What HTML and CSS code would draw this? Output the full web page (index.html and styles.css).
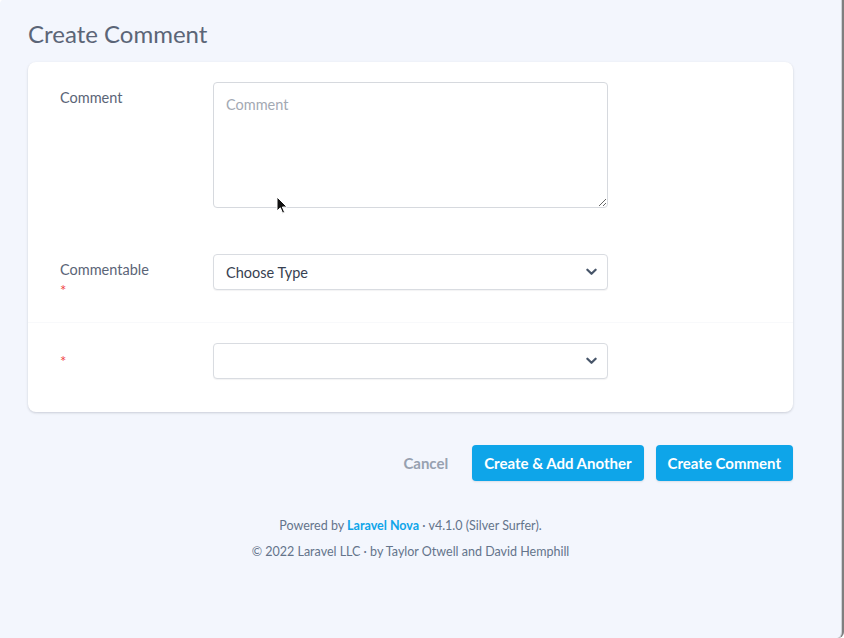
FILE: index.html
```html
<!DOCTYPE html>
<html lang="en">
<head>
<meta charset="utf-8">
<title>Create Comment</title>
<link rel="stylesheet" href="styles.css">
</head>
<body>
<div class="frame">
  <main class="page">
    <h1 class="title">Create Comment</h1>
    <form class="card">
      <div class="row row-first">
        <div class="label-col"><label class="label">Comment</label></div>
        <div class="field-col">
          <textarea class="textarea" placeholder="Comment"></textarea>
        </div>
      </div>
      <div class="row row-mid">
        <div class="label-col">
          <label class="label">Commentable</label>
          <span class="req">*</span>
        </div>
        <div class="field-col">
          <div class="select">
            <span class="select-text">Choose Type</span>
            <svg class="chev" viewBox="0 0 12 8" width="11" height="8"><path d="M1.5 1.5 L6 6 L10.5 1.5" fill="none" stroke="#475569" stroke-width="2.4" stroke-linecap="round" stroke-linejoin="round"/></svg>
          </div>
        </div>
      </div>
      <div class="row row-last">
        <div class="label-col"><span class="req req-only">*</span></div>
        <div class="field-col">
          <div class="select">
            <span class="select-text"></span>
            <svg class="chev" viewBox="0 0 12 8" width="11" height="8"><path d="M1.5 1.5 L6 6 L10.5 1.5" fill="none" stroke="#475569" stroke-width="2.4" stroke-linecap="round" stroke-linejoin="round"/></svg>
          </div>
        </div>
      </div>
    </form>
    <div class="actions">
      <button type="button" class="cancel">Cancel</button>
      <button type="button" class="btn">Create &amp; Add Another</button>
      <button type="button" class="btn">Create Comment</button>
    </div>
    <footer class="footer">
      <p>Powered by <a class="nova" href="#">Laravel Nova</a> · v4.1.0 (Silver Surfer).</p>
      <p>© 2022 Laravel LLC · by Taylor Otwell and David Hemphill</p>
    </footer>
  </main>
  <svg class="cursor" width="12" height="19" viewBox="0 0 12 19"><path d="M1 1 L1 15 L4.3 11.8 L6.6 17.2 L8.6 16.3 L6.4 11 L11 11 Z" fill="#111" stroke="#fff" stroke-width="1" stroke-linejoin="round"/></svg>
</div>
</body>
</html>
```

FILE: styles.css
```css
* { box-sizing: border-box; }
html, body { margin: 0; padding: 0; }
body {
  width: 844px;
  height: 638px;
  background: #ffffff;
  font-family: "Lato", "Noto Sans", sans-serif;
  overflow: hidden;
}
.frame {
  position: relative;
  width: 844px;
  height: 638px;
  background: #f3f6fd;
  border-right: 2px solid #7f7f7f;
  box-shadow: inset -1px 0 0 #cfd2d8;
  border-bottom-right-radius: 6px;
  border-top-left-radius: 4px;
}
.page {
  width: 765px;
  margin-left: 28px;
  padding-top: 18px;
}
.title {
  margin: 0 0 12px;
  font-size: 24px;
  line-height: 32px;
  font-weight: 400;
  color: #5b6577;
}
.card {
  background: #fff;
  border-radius: 8px;
  box-shadow: 0 1px 3px rgba(15, 23, 42, 0.12), 0 1px 2px rgba(15, 23, 42, 0.06);
}
.row {
  display: flex;
  align-items: flex-start;
}
.row-first { padding: 20px 0 26px; }
.row-mid { padding: 20px 0 26px; border-bottom: 1px solid #f8f9fb; }
.row-last { padding: 20px 0 33px; }
.label-col {
  width: 153px;
  padding-left: 32px;
  padding-top: 6px;
  display: flex;
  flex-direction: column;
}
.label {
  font-size: 14.5px;
  line-height: 20px;
  color: #5b6577;
}
.req {
  color: #ef4444;
  font-size: 15px;
  line-height: 14px;
  padding-top: 3px;
  height: 16px;
}
.req-only { padding-top: 5px; }
.field-col {
  padding-left: 32px;
}
.textarea {
  display: block;
  width: 395px;
  height: 126px;
  padding: 12px;
  border: 1px solid #d6d9de;
  border-radius: 4px;
  font-family: inherit;
  font-size: 14.5px;
  line-height: 20px;
  color: #374151;
  resize: vertical;
  background: #fff;
}
.textarea::placeholder { color: #a3a9b3; }
.select {
  width: 395px;
  height: 36px;
  border: 1px solid #d9dce1;
  border-radius: 4px;
  box-shadow: 0 1px 1px rgba(15, 23, 42, 0.05);
  display: flex;
  align-items: center;
  justify-content: space-between;
  padding: 0 10px 0 12px;
  background: #fff;
}
.select-text {
  font-size: 14.5px;
  color: #374151;
}
.chev { display: block; }
.actions {
  display: flex;
  justify-content: flex-end;
  align-items: center;
  gap: 12px;
  margin-top: 33px;
}
.cancel {
  background: none;
  border: 0;
  font-family: inherit;
  font-size: 15px;
  font-weight: 700;
  color: #97a1b0;
  padding: 0 12px;
  height: 36px;
}
.btn {
  height: 36px;
  padding: 0 12px;
  background: #0ea5e9;
  color: #fff;
  border: 0;
  border-radius: 4px;
  font-family: inherit;
  font-size: 15px;
  font-weight: 700;
  box-shadow: 0 1px 2px rgba(15, 23, 42, 0.1);
}
.footer {
  margin-top: 37px;
  text-align: center;
  font-size: 12.5px;
  color: #64748b;
}
.footer p { margin: 0 0 10px; line-height: 16px; }
.nova { color: #0ea5e9; font-weight: 700; text-decoration: none; }
.cursor {
  position: absolute;
  left: 276px;
  top: 196px;
}
```
